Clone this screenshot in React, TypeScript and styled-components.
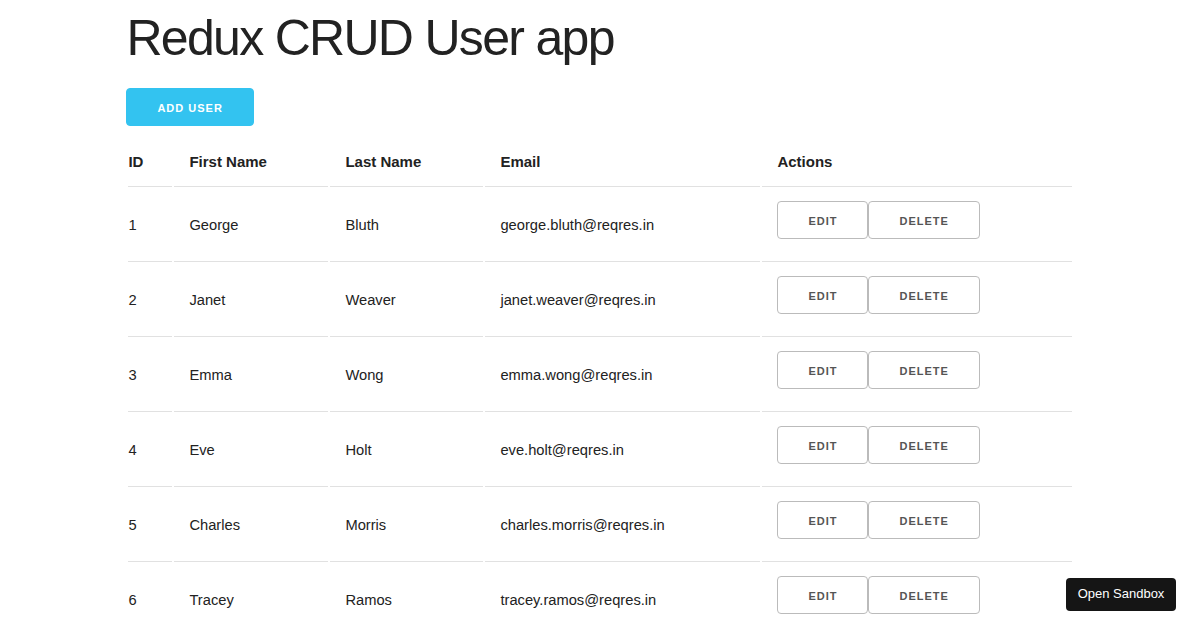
import React from 'react'
import styled, { createGlobalStyle } from 'styled-components'

type User = { id: number; first_name: string; last_name: string; email: string }

const USERS: User[] = [
  { id: 1, first_name: 'George', last_name: 'Bluth', email: 'george.bluth@reqres.in' },
  { id: 2, first_name: 'Janet', last_name: 'Weaver', email: 'janet.weaver@reqres.in' },
  { id: 3, first_name: 'Emma', last_name: 'Wong', email: 'emma.wong@reqres.in' },
  { id: 4, first_name: 'Eve', last_name: 'Holt', email: 'eve.holt@reqres.in' },
  { id: 5, first_name: 'Charles', last_name: 'Morris', email: 'charles.morris@reqres.in' },
  { id: 6, first_name: 'Tracey', last_name: 'Ramos', email: 'tracey.ramos@reqres.in' },
]

// content widths (padding excluded)
const COLUMNS: { label: string; width?: number }[] = [
  { label: 'ID', width: 29 },
  { label: 'First Name', width: 124 },
  { label: 'Last Name', width: 123 },
  { label: 'Email', width: 245 },
  { label: 'Actions' },
]

const GlobalStyle = createGlobalStyle`
  html { font-size: 62.5%; }
  body {
    margin: 8px;
    font-size: 15px;
    line-height: 1.6;
    font-family: "Liberation Sans", Arial, Helvetica, sans-serif;
    color: #222;
    background: #fff;
  }
`

const Container = styled.div`
  width: 80%;
  max-width: 960px;
  margin: 0 auto;
`

const Title = styled.h1`
  margin: 0 0 20px;
  font-size: 50px;
  line-height: 1.2;
  font-weight: 300;
  letter-spacing: -1.7px;
`

const Button = styled.button<{ $primary?: boolean }>`
  display: inline-block;
  height: 38px;
  padding: 0 30px;
  margin: 0 0 10px;
  font-family: inherit;
  font-size: 11px;
  font-weight: 600;
  line-height: 38px;
  letter-spacing: 1px;
  text-transform: uppercase;
  text-align: center;
  white-space: nowrap;
  color: ${({ $primary }) => ($primary ? '#fff' : '#555')};
  background: ${({ $primary }) => ($primary ? '#33C3F0' : 'transparent')};
  border: 1px solid ${({ $primary }) => ($primary ? '#33C3F0' : '#bbb')};
  border-radius: 4px;
  cursor: pointer;
  box-sizing: border-box;
  vertical-align: top;
`

const Table = styled.table`
  width: 100%;
  border-spacing: 2px;
  margin: 0 0 25px;
`

const Th = styled.th`
  padding: 12px 15px;
  text-align: left;
  font-weight: bold;
  border-bottom: 1px solid #e1e1e1;

  &:first-child {
    padding-left: 0;
  }
`

const Td = styled.td`
  padding: 12px 15px;
  text-align: left;
  font-size: 14.7px;
  line-height: 24px;
  border-bottom: 1px solid #e1e1e1;

  &:first-child {
    padding-left: 0;
  }
`

const Actions = styled.div`
  display: flex;
`

const SandboxLink = styled.a`
  position: fixed;
  right: 24px;
  bottom: 19px;
  width: 110px;
  height: 33px;
  display: flex;
  align-items: center;
  justify-content: center;
  background: #151515;
  color: #fff;
  font-size: 13px;
  border-radius: 4px;
  text-decoration: none;
  box-sizing: border-box;
`

const App: React.FC = () => {
  return (
    <>
      <GlobalStyle />
      <Container>
        <Title>Redux CRUD User app</Title>
        <Button $primary>Add user</Button>
        <Table>
          <thead>
            <tr>
              {COLUMNS.map(col => (
                <Th key={col.label} style={col.width ? { width: col.width } : undefined}>
                  {col.label}
                </Th>
              ))}
            </tr>
          </thead>
          <tbody>
            {USERS.map(u => (
              <tr key={u.id}>
                <Td>{u.id}</Td>
                <Td>{u.first_name}</Td>
                <Td>{u.last_name}</Td>
                <Td>{u.email}</Td>
                <Td>
                  <Actions>
                    <Button>Edit</Button>
                    <Button>Delete</Button>
                  </Actions>
                </Td>
              </tr>
            ))}
          </tbody>
        </Table>
      </Container>
      <SandboxLink href="#">Open Sandbox</SandboxLink>
    </>
  )
}

export default App
